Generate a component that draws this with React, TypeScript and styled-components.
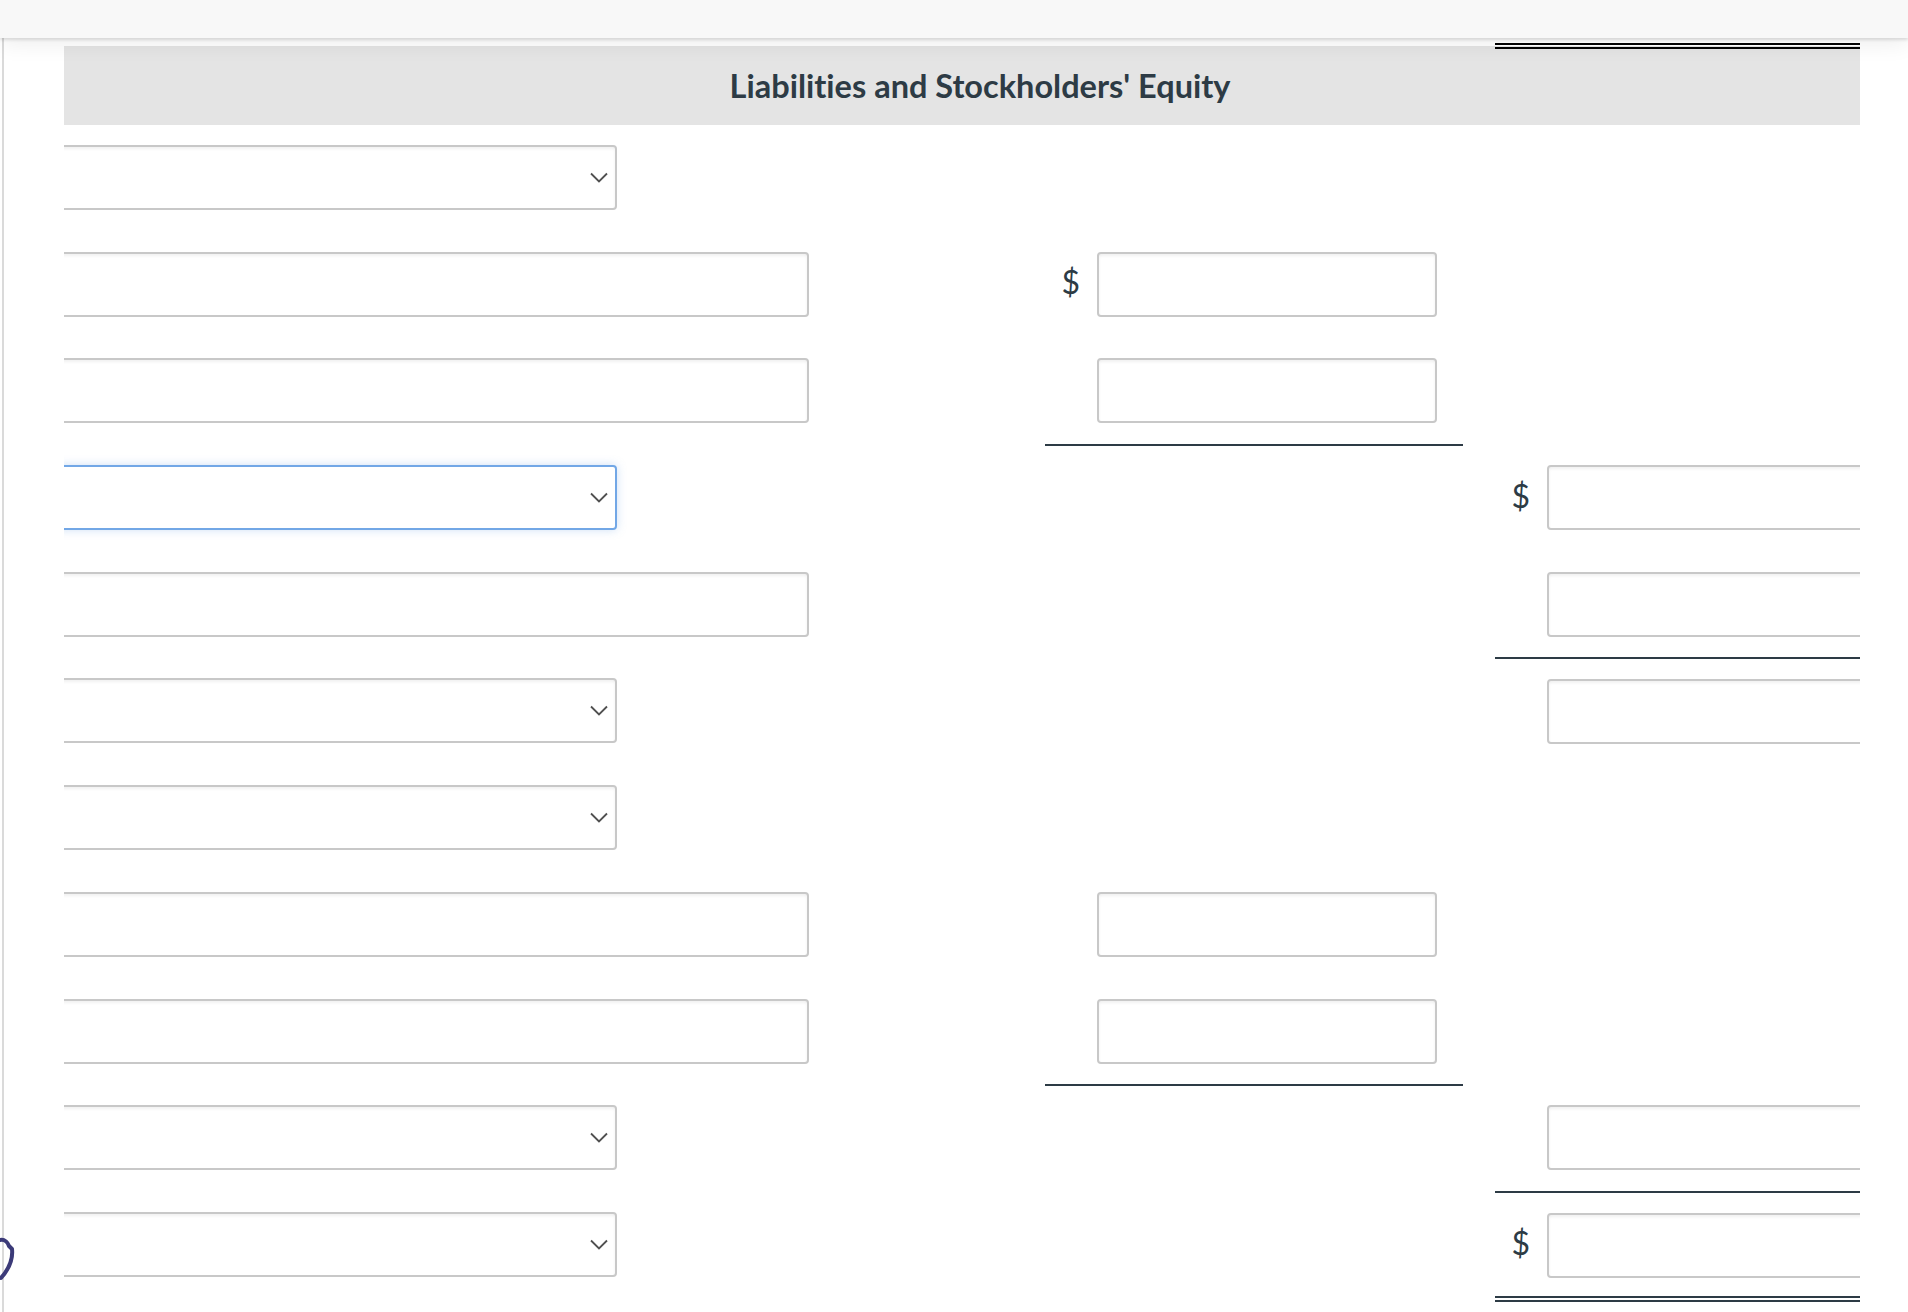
import React from 'react';
import styled, { createGlobalStyle, css } from 'styled-components';

const GlobalStyle = createGlobalStyle`
  html, body {
    margin: 0;
    padding: 0;
    background: #ffffff;
    font-family: Lato, "Noto Sans", sans-serif;
    color: #2d3b45;
  }
`;

const Page = styled.div`
  position: relative;
  width: 1908px;
  height: 1312px;
  overflow: hidden;
  background: #fff;
`;

const TopBar = styled.header`
  position: relative;
  z-index: 2;
  height: 38px;
  background: #f8f8f8;
  box-shadow: 0 2px 3px rgba(0, 0, 0, 0.12), 0 6px 22px rgba(0, 0, 0, 0.07);
`;

const Main = styled.div`
  display: flex;
  height: 1274px;
`;

const Rail = styled.aside`
  flex: 0 0 60px;
  margin-left: 2px;
  border-left: 2px solid #dadada;
`;

const Viewport = styled.div`
  width: 1796px;
  overflow: hidden;
  padding-top: 8px;
`;

const Sheet = styled.table`
  width: 1866px;
  margin-left: -17px;
  border-collapse: collapse;
  table-layout: fixed;
`;

const TitleCell = styled.th`
  position: relative;
  height: 79px;
  padding: 0;
  background: #e4e4e4;
  font-size: 32.5px;
  font-weight: 700;
  font-variant-ligatures: none;
  color: #2d3b45;
  text-align: center;
  vertical-align: middle;

  /* double rule above the totals column */
  &::before {
    content: '';
    position: absolute;
    right: 0;
    top: -3px;
    width: 418px;
    height: 2px;
    border-top: 2px solid #000;
    border-bottom: 2px solid #000;
  }
`;

const Row = styled.tr`
  height: 106.7px;
`;

type Rule = 'none' | 'single' | 'double';

const Cell = styled.td<{ $rule?: Rule; $pad?: string }>`
  padding: ${(p) => p.$pad ?? '0'};
  padding-top: 20px;
  vertical-align: top;
  ${(p) =>
    p.$rule === 'single' &&
    css`
      border-bottom: 2px solid #2d3b45;
    `}
  ${(p) =>
    p.$rule === 'double' &&
    css`
      border-bottom: 6px double #2d3b45;
    `}
`;

const AmountWrap = styled.div`
  display: flex;
  align-items: center;
  justify-content: flex-end;
  gap: 17px;
`;

const Dollar = styled.span`
  font-size: 32px;
  font-weight: 400;
  color: #2d3b45;
  line-height: 1;
  margin-bottom: 4px;
`;

const boxBase = css`
  box-sizing: border-box;
  height: 65px;
  background: #fff;
  border: 2px solid #c8c8c8;
  border-radius: 4px;
  box-shadow: inset 0 2px 3px rgba(0, 0, 0, 0.06);
`;

const TextBox = styled.div<{ $width: number }>`
  ${boxBase};
  width: ${(p) => p.$width}px;
`;

const SelectBox = styled.div<{ $focused?: boolean }>`
  ${boxBase};
  width: 560px;
  display: flex;
  align-items: center;
  justify-content: flex-end;
  padding-right: 7px;
  ${(p) =>
    p.$focused &&
    css`
      border-color: #72a7e6;
      box-shadow: 0 0 10px rgba(114, 167, 230, 0.35);
    `}
`;

const Blob = styled.svg`
  position: absolute;
  left: 0;
  top: 1236px;
`;

const Chevron = () => (
  <svg width="18" height="11" viewBox="0 0 18 11">
    <polyline points="1,1.5 9,9.5 17,1.5" fill="none" stroke="#505050" strokeWidth="1.8" />
  </svg>
);

type Kind = 'select' | 'text';

interface LineSpec {
  kind: Kind;
  focused?: boolean;
  amount?: { dollar?: boolean; rule?: Rule };
  total?: { dollar?: boolean; rule?: Rule };
}

const lines: LineSpec[] = [
  { kind: 'select' },
  { kind: 'text', amount: { dollar: true } },
  { kind: 'text', amount: { rule: 'single' } },
  { kind: 'select', focused: true, total: { dollar: true } },
  { kind: 'text', total: { rule: 'single' } },
  { kind: 'select', total: {} },
  { kind: 'select' },
  { kind: 'text', amount: {} },
  { kind: 'text', amount: { rule: 'single' } },
  { kind: 'select', total: { rule: 'single' } },
  { kind: 'select', total: { dollar: true, rule: 'double' } },
];

const Amount: React.FC<{ dollar?: boolean }> = ({ dollar }) => (
  <AmountWrap>
    {dollar && <Dollar>$</Dollar>}
    <TextBox $width={340} />
  </AmountWrap>
);

const App: React.FC = () => {
  return (
    <Page>
      <GlobalStyle />
      <TopBar />
      <Main>
        <Rail />
        <Viewport>
          <Sheet>
            <colgroup>
              <col style={{ width: 998 }} />
              <col style={{ width: 418 }} />
              <col style={{ width: 32 }} />
              <col style={{ width: 418 }} />
            </colgroup>
            <thead>
              <tr>
                <TitleCell colSpan={4}>Liabilities and Stockholders' Equity</TitleCell>
              </tr>
            </thead>
            <tbody>
              {lines.map((line, i) => (
                <Row key={i}>
                  <Cell $pad="0 0 0 10px">
                    {line.kind === 'select' ? (
                      <SelectBox $focused={line.focused}>
                        <Chevron />
                      </SelectBox>
                    ) : (
                      <TextBox $width={752} />
                    )}
                  </Cell>
                  <Cell $pad="0 26px 0 0" $rule={line.amount?.rule}>
                    {line.amount && <Amount dollar={line.amount.dollar} />}
                  </Cell>
                  <Cell />
                  <Cell $pad="0 26px 0 0" $rule={line.total?.rule}>
                    {line.total && <Amount dollar={line.total.dollar} />}
                  </Cell>
                </Row>
              ))}
            </tbody>
          </Sheet>
        </Viewport>
      </Main>
      <Blob width="16" height="48" viewBox="0 0 16 48">
        <path
          d="M0 4 C5 3 8 7 9 10 L12 13 C13 22 9 33 1 42"
          fill="none"
          stroke="#3b3a78"
          strokeWidth="4"
          strokeLinecap="round"
          strokeLinejoin="round"
        />
      </Blob>
    </Page>
  );
};

export default App;
